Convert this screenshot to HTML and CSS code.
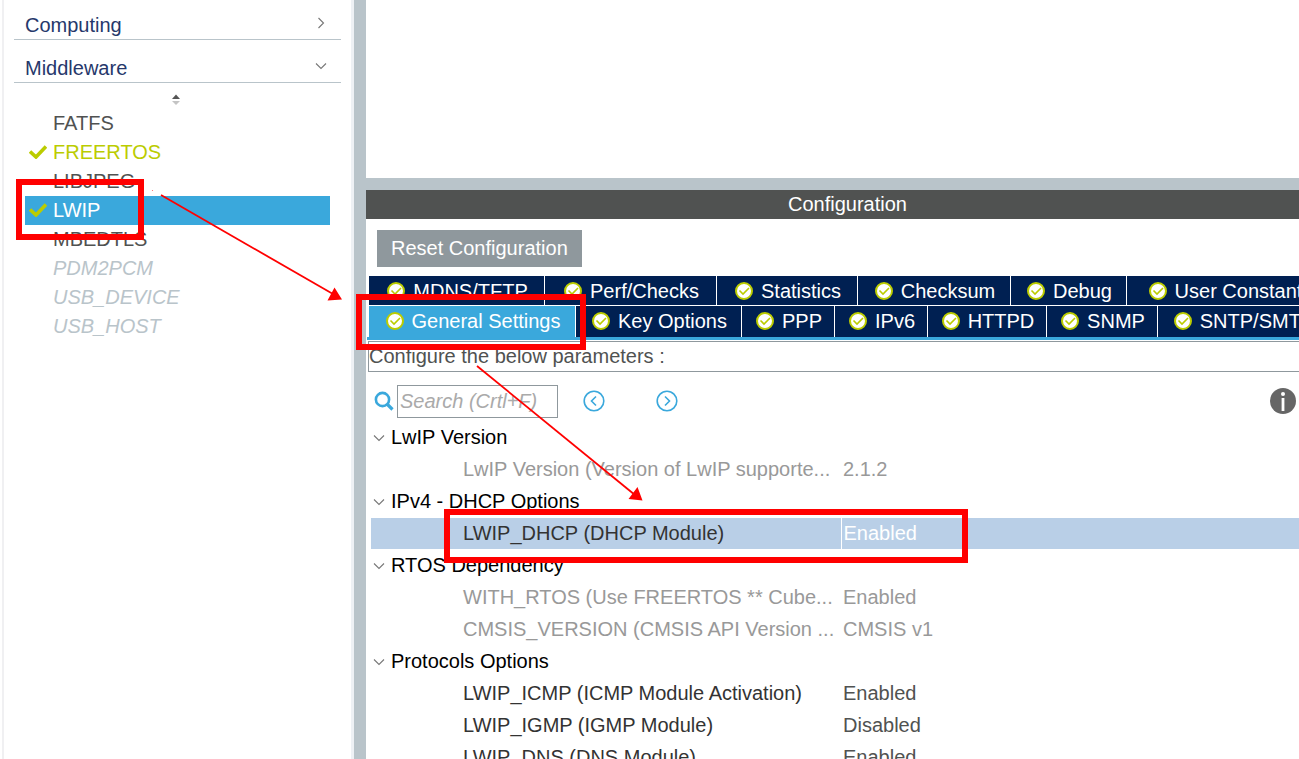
FILE: index.html
```html
<!DOCTYPE html>
<html lang="en">
<head>
<meta charset="utf-8">
<title>Configuration</title>
<link rel="stylesheet" href="styles.css">
</head>
<body>
<svg class="defs" aria-hidden="true">
  <symbol id="tick" viewBox="0 0 18 14"><path d="M1 6.5 7 12 17 1.5" fill="none" stroke="#bbcc00" stroke-width="3.6"/></symbol>
  <symbol id="ok" viewBox="0 0 18 18"><circle cx="9" cy="9" r="8" fill="#fff" stroke="#bbcc00" stroke-width="2"/><path d="M4.5 8.5 8 12l6-6" fill="none" stroke="#bbcc00" stroke-width="1.6"/></symbol>
  <symbol id="down" viewBox="0 0 12 12"><path d="M1 3.5 6 8.5l5-5" fill="none" stroke="#777" stroke-width="1.1"/></symbol>
  <symbol id="right" viewBox="0 0 12 12"><path d="M3.5 1 8.5 6l-5 5" fill="none" stroke="#777" stroke-width="1.1"/></symbol>
</svg>
<div class="app">
  <nav class="sidebar">
    <button class="category" type="button">Computing<svg class="chevron"><use href="#right"/></svg></button>
    <button class="category" type="button">Middleware<svg class="chevron"><use href="#down"/></svg></button>
    <button class="sort" type="button" aria-label="Sort"><svg width="8" height="12" viewBox="0 0 8 12"><path d="M0 5 4 0.5 8 5z" fill="#555"/><path d="M0 7h8L4 11z" fill="#c4c4c4"/></svg></button>
    <ul class="modules">
      <li class="module"><span class="mark"></span>FATFS</li>
      <li class="module active"><span class="mark"><svg class="tick"><use href="#tick"/></svg></span>FREERTOS</li>
      <li class="module"><span class="mark"></span>LIBJPEG</li>
      <li class="module selected"><span class="mark"><svg class="tick"><use href="#tick"/></svg></span>LWIP</li>
      <li class="module"><span class="mark"></span>MBEDTLS</li>
      <li class="module disabled"><span class="mark"></span>PDM2PCM</li>
      <li class="module disabled"><span class="mark"></span>USB_DEVICE</li>
      <li class="module disabled"><span class="mark"></span>USB_HOST</li>
    </ul>
  </nav>
  <main class="main">
    <section class="mode"></section>
    <h1 class="title">Configuration</h1>
    <button class="reset" type="button">Reset Configuration</button>
    <div class="tabs" role="tablist">
      <div class="tab-row upper">
        <button class="tab" role="tab"><svg class="ok"><use href="#ok"/></svg>MDNS/TFTP</button>
        <button class="tab" role="tab"><svg class="ok"><use href="#ok"/></svg>Perf/Checks</button>
        <button class="tab" role="tab"><svg class="ok"><use href="#ok"/></svg>Statistics</button>
        <button class="tab" role="tab"><svg class="ok"><use href="#ok"/></svg>Checksum</button>
        <button class="tab" role="tab"><svg class="ok"><use href="#ok"/></svg>Debug</button>
        <button class="tab" role="tab"><svg class="ok"><use href="#ok"/></svg>User Constants</button>
      </div>
      <div class="tab-row lower">
        <button class="tab current" role="tab" aria-selected="true"><svg class="ok"><use href="#ok"/></svg>General Settings</button>
        <button class="tab" role="tab"><svg class="ok"><use href="#ok"/></svg>Key Options</button>
        <button class="tab" role="tab"><svg class="ok"><use href="#ok"/></svg>PPP</button>
        <button class="tab" role="tab"><svg class="ok"><use href="#ok"/></svg>IPv6</button>
        <button class="tab" role="tab"><svg class="ok"><use href="#ok"/></svg>HTTPD</button>
        <button class="tab" role="tab"><svg class="ok"><use href="#ok"/></svg>SNMP</button>
        <button class="tab" role="tab"><svg class="ok"><use href="#ok"/></svg>SNTP/SMTP</button>
      </div>
    </div>
    <p class="hint">Configure the below parameters :</p>
    <div class="toolbar">
      <label class="search-label" for="search" aria-label="Search"><svg width="20" height="20" viewBox="0 0 20 20" fill="none" stroke="#3aa8dc"><circle cx="8.5" cy="8.5" r="6.6" stroke-width="2.6"/><path d="m13 13 5.5 5.5" stroke-width="3.2"/></svg></label>
      <input class="search" id="search" type="text" placeholder="Search (Crtl+F)">
      <button class="step" type="button" aria-label="Previous"><svg width="22" height="22" viewBox="0 0 22 22" fill="none" stroke="#3aa8dc" stroke-width="1.6"><circle cx="11" cy="11" r="9.8"/><path d="m13 6.5-4.5 4.5 4.5 4.5"/></svg></button>
      <button class="step" type="button" aria-label="Next"><svg width="22" height="22" viewBox="0 0 22 22" fill="none" stroke="#3aa8dc" stroke-width="1.6"><circle cx="11" cy="11" r="9.8"/><path d="m9 6.5 4.5 4.5L9 15.5"/></svg></button>
      <button class="info" type="button" aria-label="Information"><svg width="26" height="26" viewBox="0 0 26 26"><circle cx="13" cy="13" r="13" fill="#666"/><circle cx="13" cy="6" r="2" fill="#fff"/><path d="M11.6 10h2.8v13h-2.8z" fill="#fff"/></svg></button>
    </div>
    <table class="params">
      <colgroup><col class="col-name"><col></colgroup>
      <tr class="group"><th colspan="2"><svg class="fold"><use href="#down"/></svg>LwIP Version</th></tr>
      <tr class="readonly"><td>LwIP Version (Version of LwIP supporte...</td><td>2.1.2</td></tr>
      <tr class="group"><th colspan="2"><svg class="fold"><use href="#down"/></svg>IPv4 - DHCP Options</th></tr>
      <tr class="chosen"><td>LWIP_DHCP (DHCP Module)</td><td>Enabled</td></tr>
      <tr class="group"><th colspan="2"><svg class="fold"><use href="#down"/></svg>RTOS Dependency</th></tr>
      <tr class="readonly"><td>WITH_RTOS (Use FREERTOS ** Cube...</td><td>Enabled</td></tr>
      <tr class="readonly"><td>CMSIS_VERSION (CMSIS API Version ...</td><td>CMSIS v1</td></tr>
      <tr class="group"><th colspan="2"><svg class="fold"><use href="#down"/></svg>Protocols Options</th></tr>
      <tr><td>LWIP_ICMP (ICMP Module Activation)</td><td>Enabled</td></tr>
      <tr><td>LWIP_IGMP (IGMP Module)</td><td>Disabled</td></tr>
      <tr><td>LWIP_DNS (DNS Module)</td><td>Enabled</td></tr>
    </table>
  </main>
  <svg class="annotations" aria-hidden="true">
    <g fill="none" stroke="#f00" stroke-width="6">
      <rect x="19" y="182" width="122" height="55"/>
      <rect x="359" y="297" width="224" height="50"/>
      <rect x="447" y="512" width="518" height="48"/>
    </g>
    <g stroke="#f00" stroke-width="1.8">
      <path d="m161 195 172 99"/>
      <path d="m477 366 158 129"/>
    </g>
    <path d="m342 299.500-14.500 1 7-13zM642.500 500.500l-14-1.500 9-12z" fill="#f00"/>
    <circle cx="152.500" cy="190.500" r=".6" fill="#f66"/>
  </svg>
</div>
</body>
</html>
```

FILE: styles.css
```css
* { box-sizing: border-box; }

body {
  margin: 0;
  font: 20px/28px "Liberation Sans", Arial, sans-serif;
  color: #505251;
  background: #fff;
}

button {
  font: inherit;
  border: 0;
  padding: 0;
  background: none;
}

svg { display: block; flex: none; }
.defs { position: absolute; width: 0; height: 0; }

.app {
  position: relative;
  display: grid;
  grid-template-columns: 366px 1fr;
  height: 100vh;
  overflow: hidden;
}

.sidebar {
  margin-left: 2px;
  padding: 0 10px;
  border-left: 2px solid #f0f0f2;
  border-right: 12px solid #b9c4ca;
  box-shadow: inset -3px 0 #eef1f5;
}

.category {
  display: flex;
  align-items: center;
  justify-content: space-between;
  width: 327px;
  height: 43px;
  padding: 14px 14px 0 11px;
  border-bottom: 1px solid #b9c4ca;
  color: #26386b;
}
.category:first-child { height: 40px; padding-top: 10px; }
.chevron { width: 12px; height: 12px; margin-bottom: 4px; }

.sort {
  display: block;
  width: 8px;
  margin: 11px 158px 0;
}

.modules {
  list-style: none;
  width: 305px;
  margin: 3px 11px 0;
  padding: 0;
}
.module {
  display: flex;
  align-items: center;
  height: 29px;
  padding-bottom: 2px;
}
.mark { width: 28px; padding-left: 4px; }
.tick { width: 18px; height: 14px; }
.active { color: #bbcc00; }
.selected { color: #fff; background: #3aa8dc; }
.disabled { color: #b9c4ca; font-style: italic; }

.main { overflow: hidden; }

.mode {
  height: 190px;
  border-bottom: 12px solid #b9c4ca;
}

.title {
  margin: 0;
  padding-left: 30px;
  font: inherit;
  line-height: 29px;
  text-align: center;
  color: #fff;
  background: #505251;
}

.reset {
  display: block;
  height: 37px;
  margin: 11px 11px 9px;
  padding: 0 14px 2px;
  color: #fff;
  background: #8f989d;
}

.tabs {
  margin-left: 1px;
  padding-left: 2px;
  border-bottom: 3px solid #3aa8dc;
}
.tab-row { display: grid; gap: 1px; }
.upper { grid-template-columns: 175px 171px 140px 152px 115px 205px; height: 29px; margin-bottom: 1px; }
.lower { grid-template-columns: 206px 165px 92px 92px 118px 110px 170px; height: 31px; }
.tab {
  display: flex;
  align-items: center;
  justify-content: center;
  gap: 8px;
  padding-left: 2px;
  color: #fff;
  background: #002052;
  white-space: nowrap;
}
.lower .tab { padding-bottom: 2px; }
.lower .current { background: #3aa8dc; }
.ok { width: 18px; height: 18px; }

.hint {
  height: 31px;
  margin: 1px 0 0 2px;
  border: 1px solid #8f989d;
  border-right: 0;
}

.toolbar {
  display: flex;
  align-items: center;
  height: 32px;
  margin-top: 13px;
  padding: 0 3px 0 8px;
}
.search-label { width: 23px; }
.search {
  width: 161px;
  height: 33px;
  margin-right: 25px;
  padding: 0 2px;
  border: 1px solid #8f989d;
  border-radius: 0;
  font: inherit;
  color: #505251;
}
.search::placeholder { color: #aaa; font-style: italic; opacity: 1; }
.step { width: 22px; margin-right: 51px; }
.info { margin-left: auto; }

.params {
  width: calc(100% - 5px);
  margin: 4px 0 0 5px;
  border-collapse: collapse;
  table-layout: fixed;
}
.col-name { width: 470px; }
.params tr { height: 32px; }
.params th, .params td {
  height: 32px;
  padding: 0 2px 2px;
  border-top: 1px solid #fff;
  font-weight: normal;
  text-align: left;
  white-space: nowrap;
}
.params td:first-child { padding-left: 92px; padding-right: 0; color: #333; }
.group { color: #000; }
.fold { display: inline-block; width: 12px; height: 12px; margin-right: 6px; }
.params .readonly td { color: #999; }
.params .chosen td { background: #b9cfe7; color: #fff; }
.params .chosen td:first-child { color: #333; border-right: 1px solid #fff; }

.annotations {
  position: absolute;
  inset: 0;
  width: 100%;
  height: 100%;
  pointer-events: none;
}
```
